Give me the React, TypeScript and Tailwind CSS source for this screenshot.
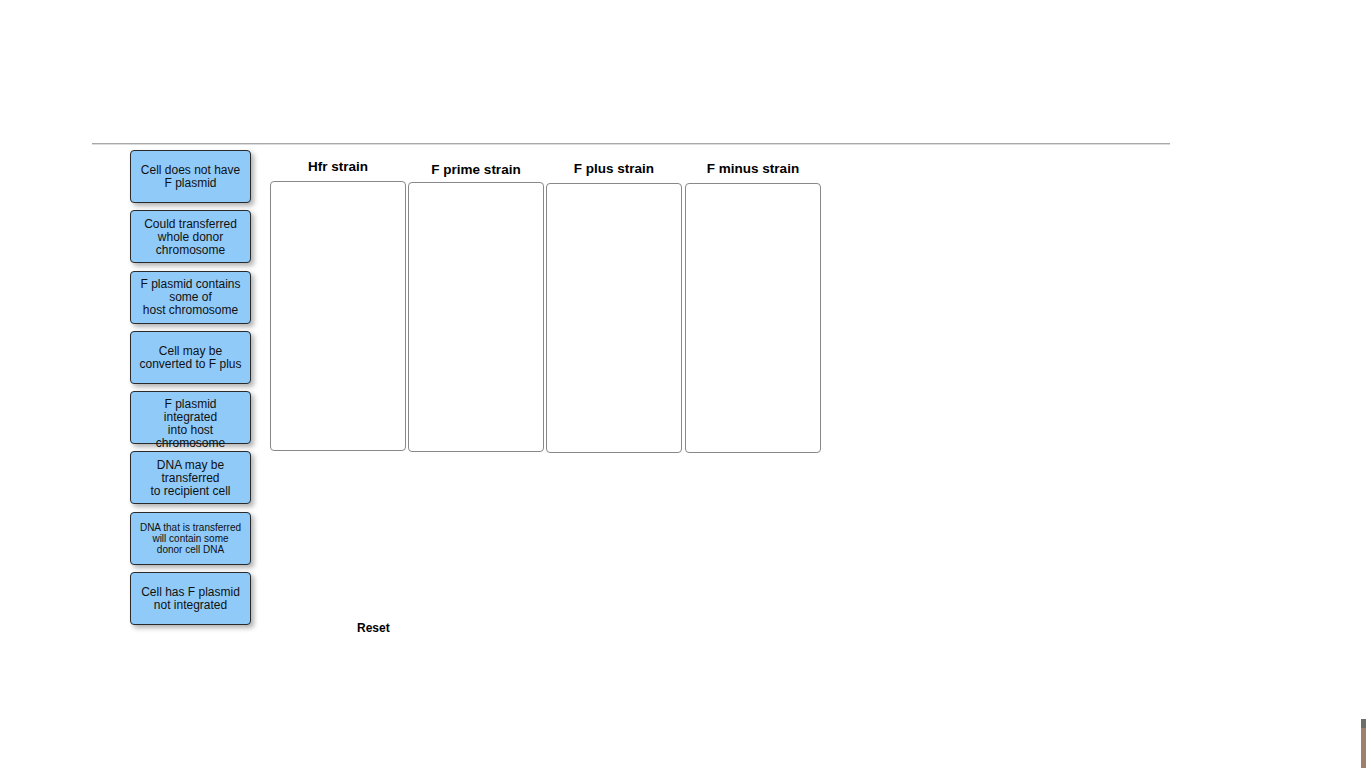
const cards: { lines: string[]; small?: boolean }[] = [
  { lines: ['Cell does not have', 'F plasmid'] },
  { lines: ['Could transferred', 'whole donor', 'chromosome'] },
  { lines: ['F plasmid contains', 'some of', 'host chromosome'] },
  { lines: ['Cell may be', 'converted to F plus'] },
  { lines: ['F plasmid', 'integrated', 'into host', 'chromosome'] },
  { lines: ['DNA may be', 'transferred', 'to recipient cell'] },
  { lines: ['DNA that is transferred', 'will contain some', 'donor cell DNA'], small: true },
  { lines: ['Cell has F plasmid', 'not integrated'] },
]

function Card({ lines, small }: { lines: string[]; small?: boolean }) {
  return (
    <div className="flex h-[53px] w-[121px] flex-col rounded-[4px] border border-[#2a2a2a] bg-[#90caf9] pt-[6px] pb-[5px] shadow-[3px_3px_5px_rgba(0,0,0,0.3)]">
      <div
        className={
          small
            ? 'my-auto text-center text-[10px] leading-[11px] text-[#111]'
            : 'my-auto text-center text-[12px] leading-[13px] text-[#111]'
        }
      >
        {lines.map((l, i) => (
          <div key={i} className="whitespace-nowrap">
            {l}
          </div>
        ))}
      </div>
    </div>
  )
}

export default function App() {
  return (
    <div className="relative min-h-[768px] bg-white font-['Liberation_Sans',Arial,sans-serif]">
      <div className="ml-[92px] w-[1078px] pt-[143px]">
        <div className="h-[2px] border-t border-b border-t-[#a8a8a8] border-b-[#dcdcdc]" />

        <div className="flex pl-[38px] pt-[5px]">
          {/* draggable cards */}
          <div className="flex flex-col gap-[7.3px]">
            {cards.map((c, i) => (
              <Card key={i} lines={c.lines} small={c.small} />
            ))}
          </div>

          {/* drop columns */}
          <div className="ml-[19px] flex flex-col">
            <div className="flex">
              <div className="flex w-[136px] flex-col pt-[9px]">
                <div className="mb-[6px] text-center text-[13.5px] font-bold leading-[16px] text-black">Hfr strain</div>
                <div className="h-[270px] rounded-[4px] border border-[#888]" />
              </div>
              <div className="ml-[2px] flex w-[136px] flex-col pt-[12px]">
                <div className="mb-[4px] text-center text-[13.5px] font-bold leading-[16px] text-black">F prime strain</div>
                <div className="h-[270px] rounded-[4px] border border-[#888]" />
              </div>
              <div className="ml-[2px] flex w-[136px] flex-col pt-[11px]">
                <div className="mb-[6px] text-center text-[13.5px] font-bold leading-[16px] text-black">F plus strain</div>
                <div className="h-[270px] rounded-[4px] border border-[#888]" />
              </div>
              <div className="ml-[3px] flex w-[136px] flex-col pt-[11px]">
                <div className="mb-[6px] text-center text-[13.5px] font-bold leading-[16px] text-black">F minus strain</div>
                <div className="h-[270px] rounded-[4px] border border-[#888]" />
              </div>
            </div>
            <div className="ml-[87px] mt-[168px] text-[12px] font-bold leading-[14px] text-black">Reset</div>
          </div>
        </div>
      </div>

      {/* edge strip at bottom right */}
      <div className="absolute bottom-0 right-0 flex h-[49px] w-[5px] flex-col">
        <div className="h-[9px] bg-[#6e6e66]" />
        <div className="flex-1 bg-[#a0806a]" />
      </div>
    </div>
  )
}
